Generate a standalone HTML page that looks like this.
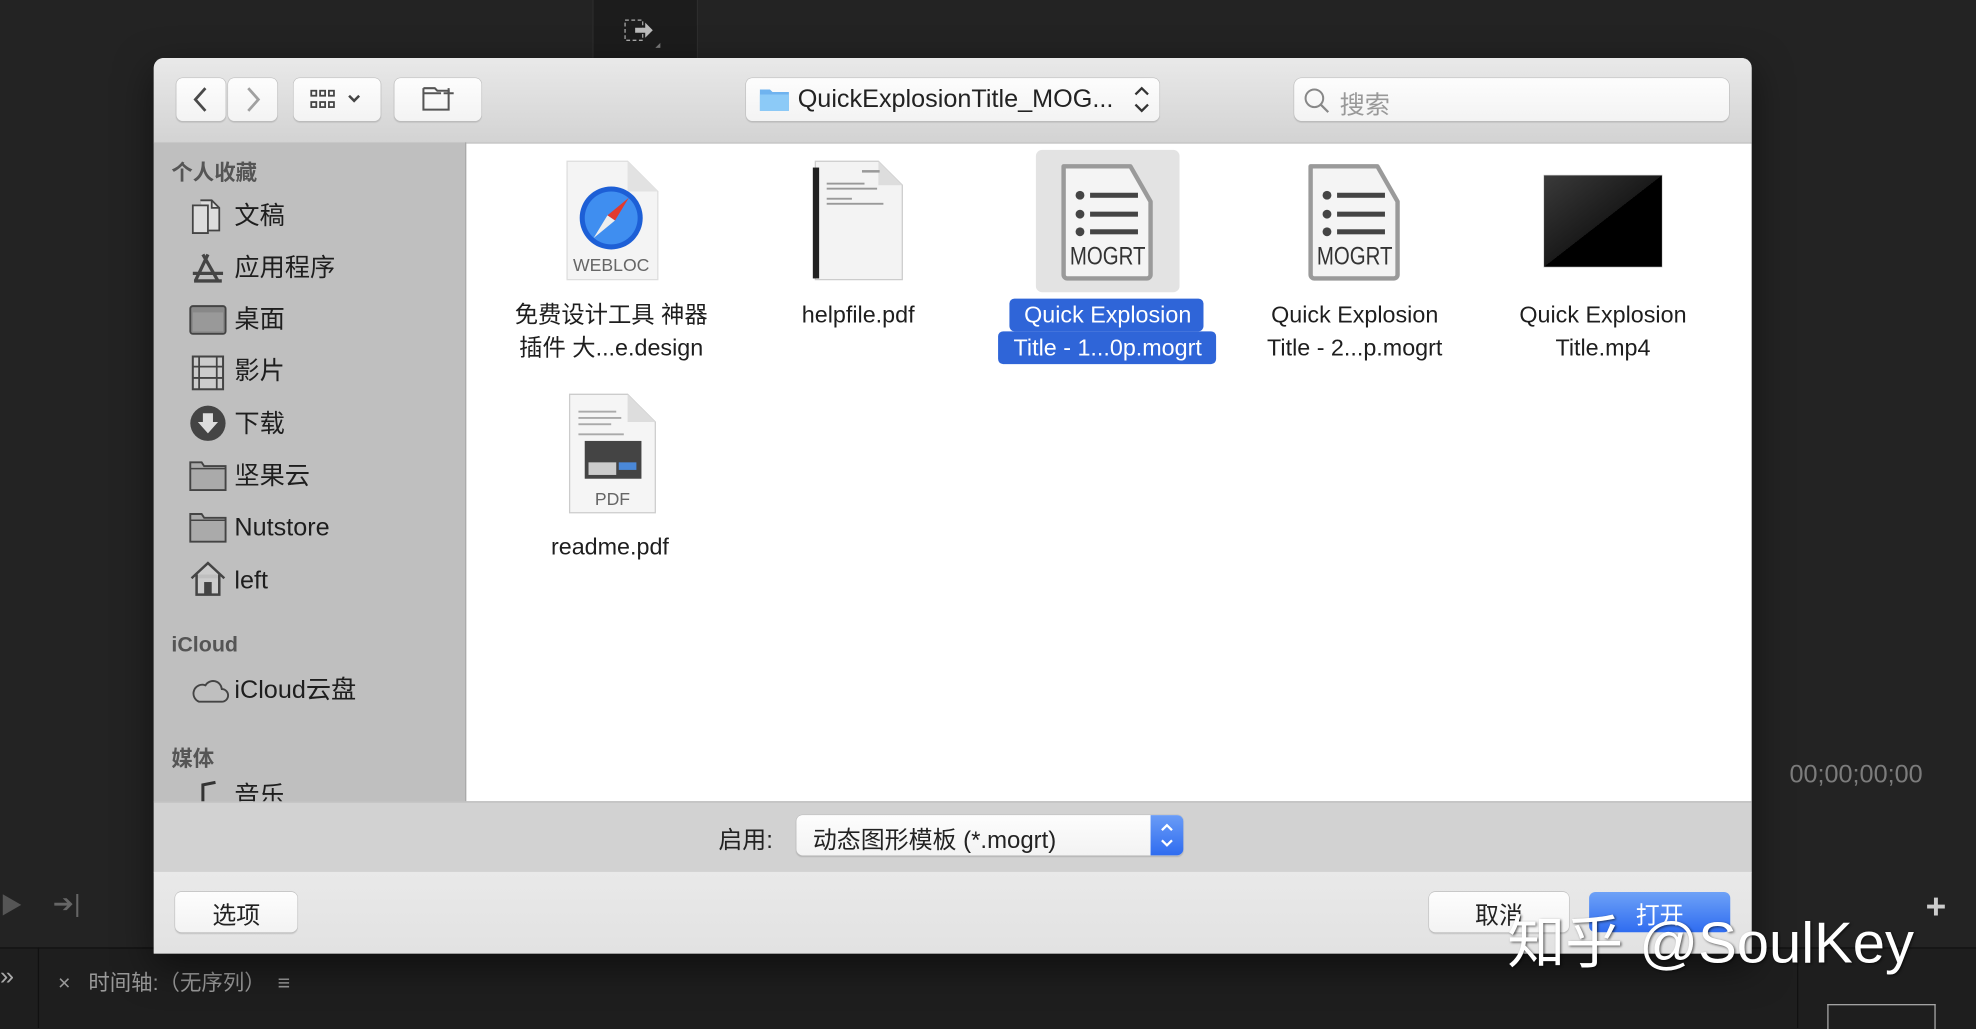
<!DOCTYPE html>
<html><head><meta charset="utf-8"><style>
html,body{margin:0;padding:0;background:#232323;overflow:hidden;width:1976px;height:1028px}
#w{position:absolute;left:0;top:0;width:1568px;height:816px;transform:scale(1.2602,1.2598);transform-origin:0 0;font-family:"Liberation Sans","Noto Sans CJK SC",sans-serif}
.a{position:absolute}
.btn{position:absolute;background:linear-gradient(#fdfdfd,#f3f3f3);border-radius:5px;box-shadow:0 0 0 .5px #bdbdbd,0 1px 1px rgba(0,0,0,.15)}
.si{position:absolute;left:186px;font-size:20px;color:#1e1e1e;line-height:24px}
.sh{position:absolute;left:136px;font-size:17px;color:#555;font-weight:bold}
.lbl{position:absolute;font-size:18.5px;color:#1e1e1e;text-align:center;line-height:26px;width:200px}
svg{position:absolute;overflow:visible}
</style></head><body><div id="w">
<div class="a" style="left:470px;top:0;width:82px;height:46px;background:#1c1c1c;border-left:1px solid #2d2d2d;border-right:1px solid #2d2d2d"></div>
<svg style="left:494px;top:14px" width="30" height="30"><rect x="2" y="2" width="14" height="16" fill="none" stroke="#aaa" stroke-dasharray="3,2"/><path d="M10 8h8v-4l6 6-6 6v-4h-8z" fill="#bbb"/><path d="M28 22l2-2v4h-4z" fill="#777"/></svg>
<div class="a" style="left:1420px;top:604px;font-size:20px;color:#7c7c7c">00;00;00;00</div>
<div class="a" style="left:0;top:752px;width:1568px;height:64px;background:#1e1e1e;border-top:1px solid #111"></div>
<div class="a" style="left:0;top:764px;font-size:20px;color:#aaa">»</div>
<div class="a" style="left:30px;top:752px;width:1px;height:64px;background:#111"></div>
<div class="a" style="left:46px;top:766px;font-size:17px;color:#999">×&nbsp;&nbsp; 时间轴:（无序列）&nbsp; ≡</div>
<div class="a" style="left:1426px;top:752px;width:1px;height:64px;background:#111"></div>
<div class="a" style="left:1450px;top:797px;width:84px;height:19px;border:1px solid #aaa;border-bottom:none"></div>
<div class="a" style="left:42px;top:705px;font-size:20px;color:#666">➔|</div>
<div class="a" style="left:0;top:705px;font-size:18px;color:#555">▶</div>
<div class="a" style="left:1528px;top:704px;font-size:28px;color:#ccc;font-weight:bold">+</div>

<div class="a" style="left:122px;top:46px;width:1268px;height:711px;border-radius:8px 8px 0 0;overflow:hidden;background:#fff;box-shadow:0 10px 30px rgba(0,0,0,.5)">
 <div class="a" style="left:0;top:0;width:1268px;height:67px;background:linear-gradient(#e9e9e9,#d3d3d3);border-bottom:1px solid #bcbcbc"></div>
 <div class="a" style="left:0;top:67px;width:247px;height:523px;background:#bfbfbf;border-right:1px solid #a9a9a9"></div>
 <div class="a" style="left:0;top:590px;width:1268px;height:55px;background:#d2d2d2;border-top:1px solid #bbb;border-bottom:1px solid #bbb"></div>
 <div class="a" style="left:0;top:646px;width:1268px;height:65px;background:linear-gradient(#e9e9e9,#e2e2e2)"></div>
</div>
<div class="btn" style="left:140px;top:62px;width:39px;height:34px"></div>
<div class="btn" style="left:181px;top:62px;width:39px;height:34px"></div>
<svg style="left:150px;top:66px" width="20" height="26"><path d="M13 4l-8 9 8 9" fill="none" stroke="#4a4a4a" stroke-width="2.2"/></svg>
<svg style="left:191px;top:66px" width="20" height="26"><path d="M6 4l8 9-8 9" fill="none" stroke="#a0a0a0" stroke-width="2.2"/></svg>
<div class="btn" style="left:233px;top:62px;width:69px;height:34px"></div>
<svg style="left:246px;top:70px" width="50" height="20"><g fill="none" stroke="#444" stroke-width="1.4"><rect x="1" y="2" width="4" height="4"/><rect x="8" y="2" width="4" height="4"/><rect x="15" y="2" width="4" height="4"/><rect x="1" y="11" width="4" height="4"/><rect x="8" y="11" width="4" height="4"/><rect x="15" y="11" width="4" height="4"/><path d="M31 6l4 4 4-4" stroke-width="2"/></g></svg>
<div class="btn" style="left:313px;top:62px;width:69px;height:34px"></div>
<svg style="left:334px;top:66px" width="30" height="26"><path d="M2 4h9l2 2h9v2M2 4v17h20v-8M2 8h14" fill="none" stroke="#555" stroke-width="1.6"/><path d="M22 4v9M18 8h8" stroke="#555" stroke-width="1.6"/></svg>
<div class="btn" style="left:592px;top:62px;width:328px;height:34px"></div>
<svg style="left:602px;top:69px" width="26" height="20"><path d="M1 2h8l2 2h13v15H1z" fill="#6fb3ef"/><path d="M1 6h23v13H1z" fill="#8ccaf7"/></svg>
<div class="a" style="left:633px;top:68px;font-size:20px;color:#222">QuickExplosionTitle_MOG...</div>
<svg style="left:898px;top:67px" width="16" height="26"><path d="M3 8l5-5 5 5M3 16l5 5 5-5" fill="none" stroke="#333" stroke-width="1.8"/></svg>
<div class="btn" style="left:1027px;top:62px;width:345px;height:34px;border-radius:6px"></div>
<svg style="left:1034px;top:69px" width="24" height="24"><circle cx="9" cy="9" r="7" fill="none" stroke="#888" stroke-width="1.6"/><path d="M14 14l6 6" stroke="#888" stroke-width="1.8"/></svg>
<div class="a" style="left:1063px;top:67px;font-size:20px;color:#999">搜索</div>

<div class="sh" style="top:123px">个人收藏</div>
<svg style="left:150px;top:158px" width="30" height="28"><path d="M3 5h12l0 22H3z M9 1h9l6 6v18H15" fill="#ddd" stroke="#444" stroke-width="1.4"/><path d="M18 1v6h6" fill="none" stroke="#444" stroke-width="1.4"/></svg>
<div class="si" style="top:160px">文稿</div>
<svg style="left:150px;top:199px" width="30" height="28"><path d="M15 3L5 24M11 3l12 21M3 18h24M4 24h22" fill="none" stroke="#444" stroke-width="2.6"/></svg>
<div class="si" style="top:201px">应用程序</div>
<svg style="left:150px;top:241px" width="30" height="28"><rect x="1" y="2" width="28" height="22" rx="2" fill="#888" stroke="#444" stroke-width="1.5"/><rect x="3" y="7" width="24" height="15" fill="#999"/></svg>
<div class="si" style="top:242px">桌面</div>
<svg style="left:150px;top:282px" width="30" height="28"><rect x="3" y="1" width="24" height="26" fill="#ccc" stroke="#444" stroke-width="1.6"/><path d="M8 1v26M22 1v26M3 9h24M3 18h24" stroke="#444" stroke-width="1.4"/></svg>
<div class="si" style="top:283px">影片</div>
<svg style="left:150px;top:322px" width="30" height="30"><circle cx="15" cy="14" r="14" fill="#444"/><path d="M11 6h8v7h4l-8 9-8-9h4z" fill="#ddd"/></svg>
<div class="si" style="top:325px">下载</div>
<svg style="left:150px;top:364px" width="30" height="28"><path d="M1 3h9l2 3h17v19H1z" fill="#aaa" stroke="#444" stroke-width="1.5"/><path d="M1 8h28" stroke="#444" stroke-width="1.2"/></svg>
<div class="si" style="top:366px">坚果云</div>
<svg style="left:150px;top:405px" width="30" height="28"><path d="M1 3h9l2 3h17v19H1z" fill="#aaa" stroke="#444" stroke-width="1.5"/><path d="M1 8h28" stroke="#444" stroke-width="1.2"/></svg>
<div class="si" style="top:407px">Nutstore</div>
<svg style="left:150px;top:445px" width="30" height="30"><path d="M2 14L15 2l13 12M6 11v16h18V11" fill="#ccc" stroke="#444" stroke-width="2"/><rect x="12" y="17" width="6" height="10" fill="#444"/></svg>
<div class="si" style="top:449px">left</div>
<div class="sh" style="top:502px;font-weight:bold">iCloud</div>
<svg style="left:150px;top:536px" width="32" height="24"><path d="M8 21h18a5 5 0 0 0 0-10a7 7 0 0 0-13-3a6 6 0 0 0-5 13z" fill="none" stroke="#444" stroke-width="1.5"/></svg>
<div class="si" style="top:536px">iCloud云盘</div>
<div class="sh" style="top:588px">媒体</div>
<svg style="left:155px;top:620px" width="20" height="16"><path d="M6 16V3l10-2" fill="none" stroke="#333" stroke-width="2.4"/></svg>
<div class="si" style="top:620px;height:16px;overflow:hidden">音乐</div>

<svg style="left:449px;top:127px" width="74" height="96"><path d="M1 1h48l24 24v70H1z" fill="#f4f4f4" stroke="#ddd"/><path d="M49 1v24h24" fill="#e2e2e2"/><circle cx="36" cy="46" r="25" fill="#1d5fd6"/><circle cx="36" cy="46" r="21" fill="#3f8ef0"/><path d="M50 30L39 48 33 44z" fill="#e03a2f"/><path d="M22 62l11-18 6 4z" fill="#eee"/><text x="36" y="88" font-size="14" fill="#666" text-anchor="middle" font-family="Liberation Sans">WEBLOC</text></svg>
<div class="lbl" style="left:385px;top:237px">免费设计工具 神器<br>插件 大...e.design</div>
<svg style="left:644px;top:127px" width="74" height="96"><path d="M3 1h50l19 19v75H3z" fill="#f3f3f3" stroke="#ccc"/><path d="M53 1v19h19" fill="#ddd"/><rect x="1" y="6" width="5" height="88" fill="#222"/><g fill="#999"><rect x="40" y="8" width="14" height="2"/><rect x="12" y="18" width="30" height="1.5"/><rect x="12" y="22" width="40" height="1.5"/><rect x="12" y="30" width="20" height="1.5"/><rect x="12" y="34" width="45" height="1.5"/></g></svg>
<div class="lbl" style="left:581px;top:237px">helpfile.pdf</div>
<div class="a" style="left:822px;top:119px;width:114px;height:113px;background:#e3e3e3;border-radius:5px"></div>
<svg style="left:840px;top:128px" width="80" height="96"><path d="M4 4h53l16 28v58a3 3 0 0 1-3 3H7a3 3 0 0 1-3-3z" fill="#f4f4f4" stroke="#9a9a9a" stroke-width="3.5" stroke-linejoin="round"/><g fill="#444"><circle cx="17" cy="27" r="3.5"/><circle cx="17" cy="42" r="3.5"/><circle cx="17" cy="56" r="3.5"/><rect x="25" y="25" width="38" height="4"/><rect x="25" y="40" width="38" height="4"/><rect x="25" y="54" width="38" height="4"/></g><text x="39" y="82" font-size="20" fill="#333" text-anchor="middle" font-family="Liberation Sans Narrow,Liberation Sans" textLength="60" lengthAdjust="spacingAndGlyphs">MOGRT</text></svg>
<div class="a" style="left:801px;top:237px;width:154px;height:26px;background:#2f65d8;border-radius:4px"></div>
<div class="a" style="left:792px;top:263px;width:173px;height:26px;background:#2f65d8;border-radius:4px"></div>
<div class="lbl" style="left:779px;top:237px;color:#fff">Quick Explosion<br>Title - 1...0p.mogrt</div>
<svg style="left:1036px;top:128px" width="80" height="96"><path d="M4 4h53l16 28v58a3 3 0 0 1-3 3H7a3 3 0 0 1-3-3z" fill="#f4f4f4" stroke="#9a9a9a" stroke-width="3.5" stroke-linejoin="round"/><g fill="#444"><circle cx="17" cy="27" r="3.5"/><circle cx="17" cy="42" r="3.5"/><circle cx="17" cy="56" r="3.5"/><rect x="25" y="25" width="38" height="4"/><rect x="25" y="40" width="38" height="4"/><rect x="25" y="54" width="38" height="4"/></g><text x="39" y="82" font-size="20" fill="#333" text-anchor="middle" font-family="Liberation Sans Narrow,Liberation Sans" textLength="60" lengthAdjust="spacingAndGlyphs">MOGRT</text></svg>
<div class="lbl" style="left:975px;top:237px">Quick Explosion<br>Title - 2...p.mogrt</div>
<svg style="left:1224px;top:138px" width="96" height="76"><defs><linearGradient id="g" x1="0" y1="0" x2="1" y2="1"><stop offset="0" stop-color="#3a3a3a"/><stop offset=".5" stop-color="#1a1a1a"/><stop offset=".5" stop-color="#000"/></linearGradient></defs><rect x="1" y="1" width="94" height="73" fill="url(#g)" stroke="#ccc" stroke-width=".5"/></svg>
<div class="lbl" style="left:1172px;top:237px">Quick Explosion<br>Title.mp4</div>
<svg style="left:451px;top:312px" width="70" height="96"><path d="M1 1h46l22 22v72H1z" fill="#f5f5f5" stroke="#ccc"/><path d="M47 1v22h22" fill="#ddd"/><g fill="#aaa"><rect x="8" y="14" width="30" height="1.5"/><rect x="8" y="19" width="34" height="1.5"/><rect x="8" y="24" width="26" height="1.5"/><rect x="8" y="32" width="36" height="1.5"/></g><rect x="13" y="38" width="45" height="30" fill="#444"/><rect x="16" y="55" width="22" height="10" fill="#ccc"/><rect x="40" y="55" width="14" height="6" fill="#4a88d8"/><text x="35" y="89" font-size="14" fill="#666" text-anchor="middle" font-family="Liberation Sans">PDF</text></svg>
<div class="lbl" style="left:384px;top:421px">readme.pdf</div>

<div class="a" style="left:570px;top:652px;font-size:19px;color:#222">启用:</div>
<div class="btn" style="left:632px;top:647px;width:307px;height:32px"></div>
<div class="a" style="left:913px;top:647px;width:26px;height:32px;background:linear-gradient(#6a9cf6,#2f6cf0);border-radius:0 5px 5px 0"></div>
<svg style="left:918px;top:651px" width="16" height="24"><path d="M4 8l4-4 4 4M4 16l4 4 4-4" fill="none" stroke="#fff" stroke-width="1.8"/></svg>
<div class="a" style="left:645px;top:652px;font-size:19px;color:#222">动态图形模板 (*.mogrt)</div>
<div class="btn" style="left:139px;top:708px;width:97px;height:32px"></div>
<div class="a" style="left:139px;top:712px;width:97px;text-align:center;font-size:19px;color:#222">选项</div>
<div class="btn" style="left:1134px;top:708px;width:111px;height:32px"></div>
<div class="a" style="left:1134px;top:712px;width:111px;text-align:center;font-size:19px;color:#222">取消</div>
<div class="a" style="left:1261px;top:708px;width:112px;height:32px;background:linear-gradient(#6ea2f7,#2f6cf0);border-radius:5px"></div>
<div class="a" style="left:1261px;top:712px;width:112px;text-align:center;font-size:19px;color:#fff">打开</div>
<div class="a" style="left:1196px;top:712px;font-size:46px;color:#fff;text-shadow:1px 1px 2px rgba(0,0,0,.6);white-space:nowrap">知乎 @SoulKey</div>
</div></body></html>
